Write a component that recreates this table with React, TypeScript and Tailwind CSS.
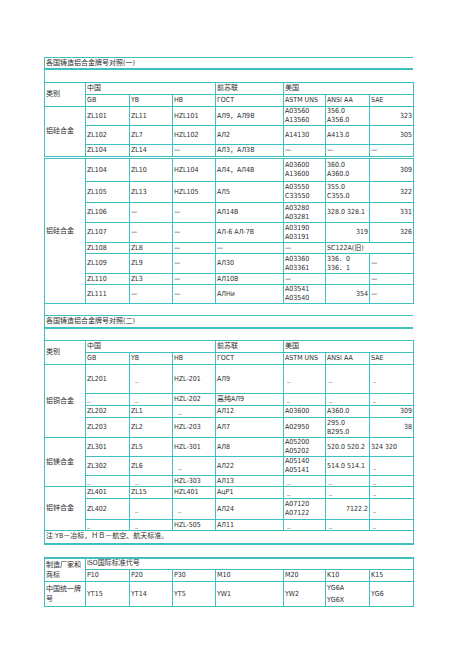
import React from "react";

const C = "border border-[#3fbfbf] px-[1px] align-middle leading-[9px] overflow-hidden";
const R = "border border-[#3fbfbf] px-[1px] align-middle leading-[9px] text-right";

const widths = ["w-[41px]", "w-[44px]", "w-[43px]", "w-[43px]", "w-[68px]", "w-[42px]", "w-[44px]", "w-[44px]"];

function Cols() {
  return (
    <colgroup>
      {widths.map((w, i) => (
        <col key={i} className={w} />
      ))}
    </colgroup>
  );
}

function Header() {
  return (
    <>
      <tr className="h-[12px]">
        <td className={C} rowSpan={2}>类别</td>
        <td className={C} colSpan={3}>中国</td>
        <td className={C}>前苏联</td>
        <td className={C} colSpan={3}>美国</td>
      </tr>
      <tr className="h-[12px]">
        <td className={C}>GB</td>
        <td className={C}>YB</td>
        <td className={C}>HB</td>
        <td className={C}>ГОСТ</td>
        <td className={C}>ASTM UNS</td>
        <td className={C}>ANSI AA</td>
        <td className={C}>SAE</td>
      </tr>
    </>
  );
}

function Two({ a, b }: { a: string; b: string }) {
  return (
    <>
      {a}
      <br />
      {b}
    </>
  );
}

const U = "_";

export default function App() {
  return (
    <div
      className="min-h-[670px] w-[474px] bg-white pl-[44px] pt-[57px] text-[7px] text-[#2b2b2b]"
      style={{ fontFamily: "'DejaVu Sans Condensed','DejaVu Sans','Noto Sans CJK SC',sans-serif" }}
    >
      {/* Section 1 title */}
      <div className="h-[13px] w-[369px] border-l border-t border-b-2 border-[#3fbfbf] px-[1px] leading-[11px]">
        各国铸造铝合金牌号对照(一)
      </div>
      <div className="h-[12px] w-[369px] border-l border-[#3fbfbf]"></div>

      <table className="w-[369px] table-fixed border-collapse">
        <Cols />
        <tbody>
          <Header />
          <tr className="h-[19px]">
            <td className={C} rowSpan={3}>铝硅合金</td>
            <td className={C}>ZL101</td>
            <td className={C}>ZL11</td>
            <td className={C}>HZL101</td>
            <td className={C}>АЛ9，АЛ9В</td>
            <td className={C}><Two a="A03560" b="A13560" /></td>
            <td className={C}><Two a="356.0" b="A356.0" /></td>
            <td className={R}>323</td>
          </tr>
          <tr className="h-[19px]">
            <td className={C}>ZL102</td>
            <td className={C}>ZL7</td>
            <td className={C}>HZL102</td>
            <td className={C}>АЛ2</td>
            <td className={C}>A14130</td>
            <td className={C}>A413.0</td>
            <td className={R}>305</td>
          </tr>
          <tr className="h-[12px]">
            <td className={C}>ZL104</td>
            <td className={C}>ZL14</td>
            <td className={C}>—</td>
            <td className={C}>АЛ3，АЛ3В</td>
            <td className={C}>—</td>
            <td className={C}>—</td>
            <td className={C}>—</td>
          </tr>
        </tbody>
      </table>

      <table className="mt-[1px] w-[369px] table-fixed border-collapse">
        <Cols />
        <tbody>
          <tr className="h-[23px]">
            <td className={C} rowSpan={8}>铝硅合金</td>
            <td className={C}>ZL104</td>
            <td className={C}>ZL10</td>
            <td className={C}>HZL104</td>
            <td className={C}>АЛ4，АЛ4В</td>
            <td className={C}><Two a="A03600" b="A13600" /></td>
            <td className={C}><Two a="360.0" b="A360.0" /></td>
            <td className={R}>309</td>
          </tr>
          <tr className="h-[21px]">
            <td className={C}>ZL105</td>
            <td className={C}>ZL13</td>
            <td className={C}>HZL105</td>
            <td className={C}>АЛ5</td>
            <td className={C}><Two a="A03550" b="C33550" /></td>
            <td className={C}><Two a="355.0" b="C355.0" /></td>
            <td className={R}>322</td>
          </tr>
          <tr className="h-[20px]">
            <td className={C}>ZL106</td>
            <td className={C}>—</td>
            <td className={C}>—</td>
            <td className={C}>АЛ14В</td>
            <td className={C}><Two a="A03280" b="A03281" /></td>
            <td className={C}>328.0 328.1</td>
            <td className={R}>331</td>
          </tr>
          <tr className="h-[20px]">
            <td className={C}>ZL107</td>
            <td className={C}>—</td>
            <td className={C}>—</td>
            <td className={C}>АЛ-6 АЛ-7В</td>
            <td className={C}><Two a="A03190" b="A03191" /></td>
            <td className={R}>319</td>
            <td className={R}>326</td>
          </tr>
          <tr className="h-[11px]">
            <td className={C}>ZL108</td>
            <td className={C}>ZL8</td>
            <td className={C}>—</td>
            <td className={C}>—</td>
            <td className={C}>—</td>
            <td className={C} colSpan={2}>SC122A(旧)</td>
          </tr>
          <tr className="h-[20px]">
            <td className={C}>ZL109</td>
            <td className={C}>ZL9</td>
            <td className={C}>—</td>
            <td className={C}>АЛ30</td>
            <td className={C}><Two a="A03360" b="A03361" /></td>
            <td className={C}><Two a="336．0" b="336．1" /></td>
            <td className={C}>—</td>
          </tr>
          <tr className="h-[11px]">
            <td className={C}>ZL110</td>
            <td className={C}>ZL3</td>
            <td className={C}>—</td>
            <td className={C}>АЛ10В</td>
            <td className={C}>—</td>
            <td className={C}></td>
            <td className={C}>—</td>
          </tr>
          <tr className="h-[19px]">
            <td className={C}>ZL111</td>
            <td className={C}>—</td>
            <td className={C}>—</td>
            <td className={C}>АЛНи</td>
            <td className={C}><Two a="A03541" b="A03540" /></td>
            <td className={R}>354</td>
            <td className={C}>—</td>
          </tr>
        </tbody>
      </table>

      {/* Section 2 title */}
      <div className="h-[12px] w-[369px] border-l border-b border-[#3fbfbf]"></div>
      <div className="h-[13px] w-[369px] border-l border-b-2 border-[#3fbfbf] px-[1px] leading-[11px]">
        各国铸造铝合金牌号对照(二)
      </div>
      <div className="h-[11px] w-[369px] border-l border-[#3fbfbf]"></div>

      <table className="w-[369px] table-fixed border-collapse">
        <Cols />
        <tbody>
          <Header />
          <tr className="h-[29px]">
            <td className={C} rowSpan={4}>铝铜合金</td>
            <td className={C}>ZL201</td>
            <td className={C}><span className="pl-[4px] text-[#888]">{U}</span></td>
            <td className={C}>HZL-201</td>
            <td className={C}>АЛ9</td>
            <td className={C}><span className="pl-[2px] text-[#888]">{U}</span></td>
            <td className={C}><span className="pl-[2px] text-[#888]">{U}</span></td>
            <td className={C}><span className="pl-[2px] text-[#888]">{U}</span></td>
          </tr>
          <tr className="h-[12px]">
            <td className={C}><span className="text-[#888]">{U}</span></td>
            <td className={C}><span className="pl-[4px] text-[#888]">{U}</span></td>
            <td className={C}>HZL-202</td>
            <td className={C}>高纯АЛ9</td>
            <td className={C}><span className="pl-[2px] text-[#888]">{U}</span></td>
            <td className={C}><span className="pl-[2px] text-[#888]">{U}</span></td>
            <td className={C}><span className="pl-[2px] text-[#888]">{U}</span></td>
          </tr>
          <tr className="h-[12px]">
            <td className={C}>ZL202</td>
            <td className={C}>ZL1</td>
            <td className={C}><span className="pl-[4px] text-[#888]">{U}</span></td>
            <td className={C}>АЛ12</td>
            <td className={C}>A03600</td>
            <td className={C}>A360.0</td>
            <td className={R}>309</td>
          </tr>
          <tr className="h-[20px]">
            <td className={C}>ZL203</td>
            <td className={C}>ZL2</td>
            <td className={C}>HZL-203</td>
            <td className={C}>АЛ7</td>
            <td className={C}>A02950</td>
            <td className={C}><Two a="295.0" b="B295.0" /></td>
            <td className={R}>38</td>
          </tr>
          <tr className="h-[19px]">
            <td className={C} rowSpan={3}>铝镁合金</td>
            <td className={C}>ZL301</td>
            <td className={C}>ZL5</td>
            <td className={C}>HZL-301</td>
            <td className={C}>АЛ8</td>
            <td className={C}><Two a="A05200" b="A05202" /></td>
            <td className={C}>520.0 520.2</td>
            <td className={C}>324 320</td>
          </tr>
          <tr className="h-[18px]">
            <td className={C}>ZL302</td>
            <td className={C}>ZL6</td>
            <td className={C}><span className="pl-[4px] text-[#888]">{U}</span></td>
            <td className={C}>АЛ22</td>
            <td className={C}><Two a="A05140" b="A05141" /></td>
            <td className={C}>514.0 514.1</td>
            <td className={C}><span className="pl-[2px] text-[#888]">{U}</span></td>
          </tr>
          <tr className="h-[11px]">
            <td className={C}><span className="text-[#888]">{U}</span></td>
            <td className={C}><span className="pl-[4px] text-[#888]">{U}</span></td>
            <td className={C}>HZL-303</td>
            <td className={C}>АЛ13</td>
            <td className={C}><span className="pl-[2px] text-[#888]">{U}</span></td>
            <td className={C}><span className="pl-[2px] text-[#888]">{U}</span></td>
            <td className={C}><span className="pl-[2px] text-[#888]">{U}</span></td>
          </tr>
          <tr className="h-[12px]">
            <td className={C} rowSpan={3}>铝锌合金</td>
            <td className={C}>ZL401</td>
            <td className={C}>ZL15</td>
            <td className={C}>HZL401</td>
            <td className={C}>АцР1</td>
            <td className={C}><span className="pl-[2px] text-[#888]">{U}</span></td>
            <td className={C}><span className="pl-[2px] text-[#888]">{U}</span></td>
            <td className={C}><span className="pl-[2px] text-[#888]">{U}</span></td>
          </tr>
          <tr className="h-[21px]">
            <td className={C}>ZL402</td>
            <td className={C}><span className="pl-[4px] text-[#888]">{U}</span></td>
            <td className={C}><span className="pl-[4px] text-[#888]">{U}</span></td>
            <td className={C}>АЛ24</td>
            <td className={C}><Two a="A07120" b="A07122" /></td>
            <td className={R}>7122.2</td>
            <td className={C}><span className="pl-[2px] text-[#888]">{U}</span></td>
          </tr>
          <tr className="h-[11px]">
            <td className={C}><span className="text-[#888]">{U}</span></td>
            <td className={C}><span className="pl-[4px] text-[#888]">{U}</span></td>
            <td className={C}>HZL-505</td>
            <td className={C}>АЛ11</td>
            <td className={C}><span className="pl-[2px] text-[#888]">{U}</span></td>
            <td className={C}><span className="pl-[2px] text-[#888]">{U}</span></td>
            <td className={C}><span className="pl-[2px] text-[#888]">{U}</span></td>
          </tr>
          <tr className="h-[13px]">
            <td className="border border-b-2 border-[#3fbfbf] px-[1px] align-middle leading-[9px]" colSpan={8}>
              注:YB－冶标，ＨＢ－航空、航天标准。
            </td>
          </tr>
        </tbody>
      </table>

      {/* Section 3 */}
      <table className="mt-[12px] w-[369px] table-fixed border-collapse">
        <Cols />
        <tbody>
          <tr className="h-[12px]">
            <td className="border border-t-2 border-[#3fbfbf] px-[1px] align-middle leading-[10px]" rowSpan={2}>
              制造厂家和商标
            </td>
            <td className="border border-t-2 border-[#3fbfbf] px-[1px] align-middle leading-[9px]" colSpan={7}>
              ISO国际标准代号
            </td>
          </tr>
          <tr className="h-[12px]">
            <td className={C}>P10</td>
            <td className={C}>P20</td>
            <td className={C}>P30</td>
            <td className={C}>M10</td>
            <td className={C}>M20</td>
            <td className={C}>K10</td>
            <td className={C}>K15</td>
          </tr>
          <tr className="h-[24px]">
            <td className="border border-[#3fbfbf] px-[1px] align-middle leading-[10px]">中国统一牌号</td>
            <td className={C}>YT15</td>
            <td className={C}>YT14</td>
            <td className={C}>YT5</td>
            <td className={C}>YW1</td>
            <td className={C}>YW2</td>
            <td className="border border-[#3fbfbf] px-[1px] align-middle leading-[12px]"><Two a="YG6A" b="YG6X" /></td>
            <td className={C}>YG6</td>
          </tr>
        </tbody>
      </table>
    </div>
  );
}
